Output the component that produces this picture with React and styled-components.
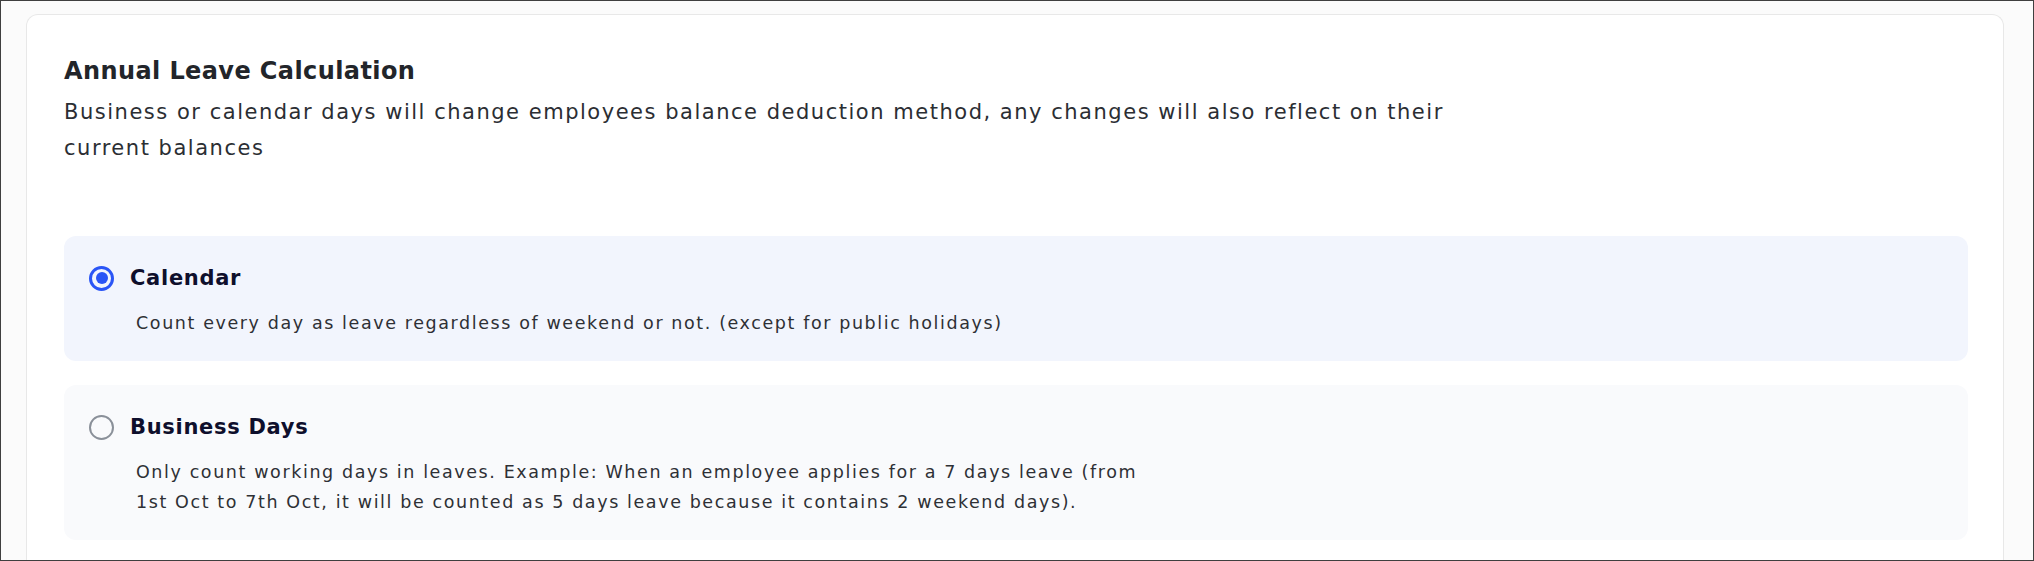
import React, { useState } from 'react';
import styled, { createGlobalStyle } from 'styled-components';

const GlobalStyle = createGlobalStyle`
  html, body {
    margin: 0;
    padding: 0;
    background: #fbfbfb;
  }
  * {
    box-sizing: border-box;
  }
`;

const Frame = styled.div`
  height: 561px;
  border: 1px solid #3f3f3f;
  background: #fbfbfb;
  overflow: hidden;
  padding: 13px 29px 0 25px;
  font-family: 'DejaVu Sans', 'Noto Sans', sans-serif;
`;

const Card = styled.section`
  background: #ffffff;
  border: 1px solid #e8e8e8;
  border-bottom: none;
  border-radius: 12px 12px 0 0;
  padding: 41px 35px 40px 37px;
  min-height: 560px;
`;

const Title = styled.h2`
  margin: 0;
  font-size: 24px;
  line-height: 30px;
  font-weight: 700;
  letter-spacing: 0.4px;
  color: #22252a;
`;

const Description = styled.p`
  margin: 8px 0 0;
  font-size: 21px;
  line-height: 36px;
  font-weight: 400;
  letter-spacing: 1.52px;
  color: #2b2e33;
`;

const Options = styled.div`
  display: flex;
  flex-direction: column;
  gap: 24px;
  margin-top: 70px;
`;

const Option = styled.label`
  display: block;
  padding: 27px 25px 23px;
  border-radius: 12px;
  background: ${(p) => (p.$active ? '#f2f5fd' : '#f9fafc')};
  cursor: pointer;
`;

const OptionHead = styled.div`
  display: flex;
  align-items: center;
  gap: 16px;
`;

const Radio = styled.span`
  flex: none;
  width: 25px;
  height: 25px;
  border-radius: 50%;
  border: ${(p) => (p.$checked ? '3px solid #2a55f6' : '2.5px solid #8a9099')};
  display: flex;
  align-items: center;
  justify-content: center;
  &::after {
    content: '';
    width: 12px;
    height: 12px;
    border-radius: 50%;
    background: #2a55f6;
    display: ${(p) => (p.$checked ? 'block' : 'none')};
  }
`;

const OptionLabel = styled.span`
  font-size: 21px;
  line-height: 30px;
  font-weight: 700;
  letter-spacing: 0.7px;
  color: #0e0f2c;
`;

const OptionText = styled.p`
  margin: 15px 0 0 47px;
  font-size: 17.5px;
  line-height: 30px;
  letter-spacing: 1.6px;
  color: #2e3035;
`;

const options = [
  {
    id: 'calendar',
    label: 'Calendar',
    text: ['Count every day as leave regardless of weekend or not. (except for public holidays)'],
  },
  {
    id: 'business',
    label: 'Business Days',
    text: [
      'Only count working days in leaves. Example: When an employee applies for a 7 days leave (from',
      '1st Oct to 7th Oct, it will be counted as 5 days leave because it contains 2 weekend days).',
    ],
  },
];

export default function App() {
  const [selected, setSelected] = useState('calendar');
  return (
    <>
      <GlobalStyle />
      <Frame>
        <Card>
          <Title>Annual Leave Calculation</Title>
          <Description>
            Business or calendar days will change employees balance deduction method, any changes will also reflect on their
            <br />
            current balances
          </Description>
          <Options>
            {options.map((o) => (
              <Option key={o.id} $active={selected === o.id} onClick={() => setSelected(o.id)}>
                <OptionHead>
                  <Radio $checked={selected === o.id} />
                  <OptionLabel>{o.label}</OptionLabel>
                </OptionHead>
                <OptionText>
                  {o.text.map((line, i) => (
                    <React.Fragment key={i}>
                      {i > 0 && <br />}
                      {line}
                    </React.Fragment>
                  ))}
                </OptionText>
              </Option>
            ))}
          </Options>
        </Card>
      </Frame>
    </>
  );
}
